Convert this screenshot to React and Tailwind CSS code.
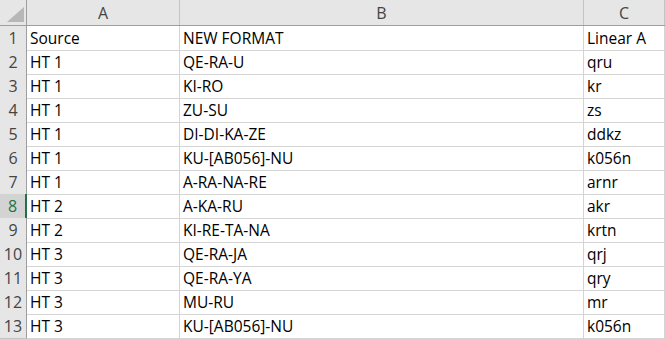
import React from 'react';

const rows = [
  ['Source', 'NEW FORMAT', 'Linear A'],
  ['HT 1', 'QE-RA-U', 'qru'],
  ['HT 1', 'KI-RO', 'kr'],
  ['HT 1', 'ZU-SU', 'zs'],
  ['HT 1', 'DI-DI-KA-ZE', 'ddkz'],
  ['HT 1', 'KU-[AB056]-NU', 'k056n'],
  ['HT 1', 'A-RA-NA-RE', 'arnr'],
  ['HT 2', 'A-KA-RU', 'akr'],
  ['HT 2', 'KI-RE-TA-NA', 'krtn'],
  ['HT 3', 'QE-RA-JA', 'qrj'],
  ['HT 3', 'QE-RA-YA', 'qry'],
  ['HT 3', 'MU-RU', 'mr'],
  ['HT 3', 'KU-[AB056]-NU', 'k056n'],
];

const SELECTED = 8;

export default function App() {
  return (
    <div className="w-[665px] h-[339px] overflow-hidden bg-white" style={{ fontFamily: '"Open Sans", "Noto Sans", sans-serif' }}>
      {/* Column headers */}
      <div className="grid grid-cols-[27px_153px_404px_1fr] h-[26px] bg-[#e6e6e6] border-b border-[#9e9e9e]">
        <div className="relative border-r border-[#9e9e9e]">
          <svg className="absolute left-[7px] top-[7px]" width="17" height="15" viewBox="0 0 17 15">
            <polygon points="17,0 17,15 0,15" fill="#b7b7b7" />
          </svg>
        </div>
        {['A', 'B', 'C'].map((c) => (
          <div key={c} className="flex items-center justify-center pt-px border-r border-[#c4c4c4] text-[16px] text-[#444]">
            {c}
          </div>
        ))}
      </div>

      {/* Body rows */}
      {rows.map((r, i) => {
        const n = i + 1;
        const sel = n === SELECTED;
        return (
          <div key={n} className="grid grid-cols-[27px_153px_404px_1fr] h-6">
            <div
              className={
                sel
                  ? 'flex items-center justify-center bg-[#d3d3d3] border-b border-[#c4c4c4] border-r-2 border-r-[#217346] text-[16px] text-[#217346]'
                  : 'flex items-center justify-center bg-[#e6e6e6] border-b border-[#c4c4c4] border-r border-r-[#9e9e9e] text-[16px] text-[#444]'
              }
            >
              {n}
            </div>
            {r.map((t, j) => (
              <div
                key={j}
                className="flex items-center pl-[3px] pt-px border-r border-b border-[#d4d4d4] text-[15.5px] text-black whitespace-nowrap overflow-hidden"
              >
                {t}
              </div>
            ))}
          </div>
        );
      })}
    </div>
  );
}
